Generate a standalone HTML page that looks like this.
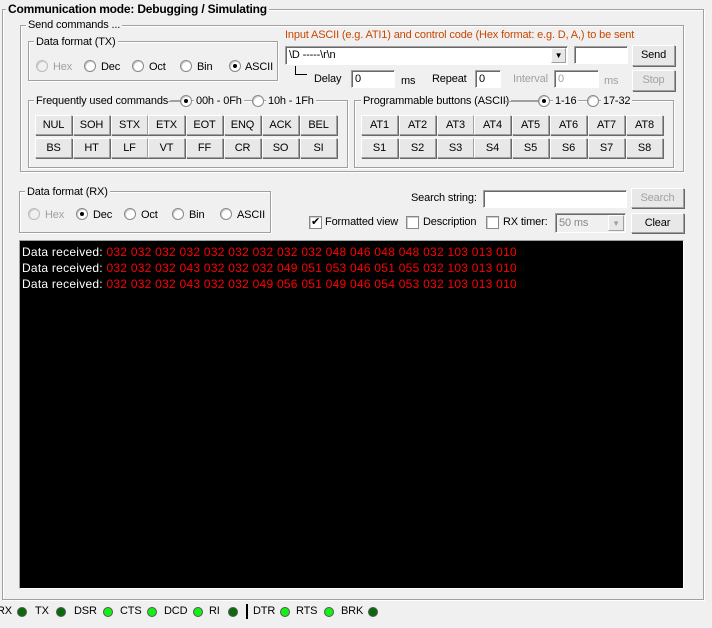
<!DOCTYPE html>
<html><head><meta charset="utf-8"><style>
*{box-sizing:border-box;margin:0;padding:0}
body{width:712px;height:628px;background:#f0f0f0;font-family:"Liberation Sans",Arial,sans-serif;font-size:11px;letter-spacing:-0.15px;color:#000;position:relative;overflow:hidden}
.a{position:absolute;white-space:nowrap}
span.a{margin-top:2px}
.g{position:absolute;border:1px solid #a0a0a0;box-shadow:1px 1px 0 #fff, inset 1px 1px 0 #fff}
.gt{position:absolute;background:#f0f0f0;padding:0 2px;white-space:nowrap;line-height:14px}
.btn{position:absolute;background:#e8e8e8;border:1px solid;border-color:#fff #a0a0a0 #a0a0a0 #fff;box-shadow:1px 1px 0 #696969;text-align:center;line-height:18px}
.in{position:absolute;background:#fff;border:1px solid;border-color:#a0a0a0 #fff #fff #a0a0a0;box-shadow:inset 1px 1px 0 #696969;padding-left:3px;line-height:16px}
.r{position:absolute;width:12px;height:12px;border-radius:50%;background:#fff;border:1px solid #888;box-shadow:inset 1px 1px 0 #ccc}
.r.on::after{content:"";position:absolute;left:3px;top:3px;width:4px;height:4px;border-radius:50%;background:#000}
.r.dis{background:#f0f0f0;border-color:#bbb}
.cb{position:absolute;width:13px;height:13px;background:#fff;border:1px solid #888;box-shadow:inset 1px 1px 0 #ccc}
.grey{color:#a0a0a0}
.led{position:absolute;width:10px;height:10px;border-radius:50%;border:1px solid #555;top:607px}
.d{background:#0a6a0a}.l{background:#14f014}
</style></head><body>
<div class="g" style="left:2px;top:9px;width:702px;height:591px"></div>
<div class="gt" style="left:6px;top:2px;font-weight:bold;font-size:12px;letter-spacing:-0.2px">Communication mode: Debugging / Simulating</div>

<div class="g" style="left:20px;top:25px;width:664px;height:147px"></div>
<div class="gt" style="left:26px;top:18px">Send commands ...</div>

<div class="g" style="left:28px;top:41px;width:250px;height:40px"></div>
<div class="gt" style="left:34px;top:35px">Data format (TX)</div>
<div class="r dis" style="left:36px;top:60px"></div><span class="a grey" style="left:53px;top:59px">Hex</span>
<div class="r" style="left:84px;top:60px"></div><span class="a" style="left:101px;top:59px">Dec</span>
<div class="r" style="left:132px;top:60px"></div><span class="a" style="left:149px;top:59px">Oct</span>
<div class="r" style="left:180px;top:60px"></div><span class="a" style="left:197px;top:59px">Bin</span>
<div class="r on" style="left:229px;top:60px"></div><span class="a" style="left:245px;top:59px">ASCII</span>

<span class="a" style="left:285px;top:27px;color:#c84800">Input ASCII (e.g. ATI1) and control code (Hex format: e.g. D, A,) to be sent</span>
<div class="in" style="left:285px;top:46px;width:283px;height:19px">\D -----\r\n</div>
<div class="btn" style="left:551px;top:48px;width:15px;height:15px;box-shadow:none;font-size:8px;line-height:14px">▼</div>
<div class="in" style="left:574px;top:46px;width:54px;height:18px"></div>
<div class="btn" style="left:632px;top:45px;width:43px;height:21px;line-height:19px">Send</div>

<div class="a" style="left:295px;top:66px;width:12px;height:9px;border-left:1px solid #000;border-bottom:1px solid #000"></div>
<span class="a" style="left:314px;top:71px">Delay</span>
<div class="in" style="left:351px;top:70px;width:44px;height:18px">0</div>
<span class="a" style="left:401px;top:73px">ms</span>
<span class="a" style="left:432px;top:71px">Repeat</span>
<div class="in" style="left:475px;top:70px;width:26px;height:18px">0</div>
<span class="a grey" style="left:513px;top:71px">Interval</span>
<div class="in" style="left:554px;top:70px;width:45px;height:18px;color:#a0a0a0">0</div>
<span class="a grey" style="left:604px;top:73px">ms</span>
<div class="btn grey" style="left:632px;top:70px;width:43px;height:21px;line-height:19px">Stop</div>

<div class="g" style="left:28px;top:100px;width:320px;height:68px"></div>
<div class="gt" style="left:34px;top:94px">Frequently used commands</div>
<div class="a" style="left:168px;top:101px;width:12px;border-top:1px solid #a0a0a0"></div>
<div class="r on" style="left:180px;top:95px"></div><span class="gt" style="left:194px;top:94px">00h - 0Fh</span>
<div class="r" style="left:252px;top:95px"></div><span class="gt" style="left:266px;top:94px">10h - 1Fh</span>

<div class="g" style="left:354px;top:100px;width:320px;height:68px"></div>
<div class="gt" style="left:361px;top:94px">Programmable buttons (ASCII)</div>
<div class="a" style="left:505px;top:101px;width:33px;border-top:1px solid #a0a0a0"></div>
<div class="r on" style="left:538px;top:95px"></div><span class="gt" style="left:553px;top:94px">1-16</span>
<div class="r" style="left:587px;top:95px"></div><span class="gt" style="left:601px;top:94px">17-32</span>

<div id="btns"></div>

<div class="g" style="left:19px;top:191px;width:252px;height:42px"></div>
<div class="gt" style="left:25px;top:185px">Data format (RX)</div>
<div class="r dis" style="left:28px;top:208px"></div><span class="a grey" style="left:45px;top:207px">Hex</span>
<div class="r on" style="left:76px;top:208px"></div><span class="a" style="left:93px;top:207px">Dec</span>
<div class="r" style="left:124px;top:208px"></div><span class="a" style="left:141px;top:207px">Oct</span>
<div class="r" style="left:172px;top:208px"></div><span class="a" style="left:189px;top:207px">Bin</span>
<div class="r" style="left:220px;top:208px"></div><span class="a" style="left:237px;top:207px">ASCII</span>

<span class="a" style="left:411px;top:190px">Search string:</span>
<div class="in" style="left:483px;top:190px;width:144px;height:18px"></div>
<div class="btn grey" style="left:631px;top:188px;width:53px;height:20px">Search</div>
<div class="cb" style="left:309px;top:216px"><span class="a" style="left:1px;top:-4px;font-size:11px">✔</span></div>
<span class="a" style="left:325px;top:214px">Formatted view</span>
<div class="cb" style="left:406px;top:216px"></div>
<span class="a" style="left:423px;top:214px">Description</span>
<div class="cb" style="left:486px;top:216px"></div>
<span class="a" style="left:503px;top:214px">RX timer:</span>
<div class="in" style="left:555px;top:213px;width:71px;height:20px;background:#f0f0f0;color:#888;line-height:18px">50 ms</div>
<div class="btn grey" style="left:608px;top:215px;width:16px;height:16px;box-shadow:none;font-size:8px;line-height:15px">▼</div>
<div class="btn" style="left:631px;top:213px;width:53px;height:20px">Clear</div>

<div class="a" style="left:19px;top:240px;width:665px;height:349px;background:#000;border:1px solid;border-color:#a0a0a0 #fff #fff #a0a0a0;padding:3px 0 0 2px;line-height:16px;color:#fff;font-size:12px;letter-spacing:0.25px">
<div>Data received: <span style="color:#f00">032 032 032 032 032 032 032 032 032 048 046 048 048 032 103 013 010</span></div>
<div>Data received: <span style="color:#f00">032 032 032 043 032 032 032 049 051 053 046 051 055 032 103 013 010</span></div>
<div>Data received: <span style="color:#f00">032 032 032 043 032 032 049 056 051 049 046 054 053 032 103 013 010</span></div>
</div>

<span class="a" style="left:-3px;top:603px">RX</span><div class="led d" style="left:17px"></div>
<span class="a" style="left:35px;top:603px">TX</span><div class="led d" style="left:56px"></div>
<span class="a" style="left:74px;top:603px">DSR</span><div class="led l" style="left:103px"></div>
<span class="a" style="left:120px;top:603px">CTS</span><div class="led l" style="left:147px"></div>
<span class="a" style="left:164px;top:603px">DCD</span><div class="led l" style="left:193px"></div>
<span class="a" style="left:209px;top:603px">RI</span><div class="led d" style="left:228px"></div>
<div class="a" style="left:246px;top:604px;width:2px;height:15px;background:#000"></div>
<span class="a" style="left:253px;top:603px">DTR</span><div class="led l" style="left:280px"></div>
<span class="a" style="left:296px;top:603px">RTS</span><div class="led l" style="left:324px"></div>
<span class="a" style="left:341px;top:603px">BRK</span><div class="led d" style="left:368px"></div>

<script>
var h='';
var r1=['NUL','SOH','STX','ETX','EOT','ENQ','ACK','BEL'],r2=['BS','HT','LF','VT','FF','CR','SO','SI'];
var p1=['AT1','AT2','AT3','AT4','AT5','AT6','AT7','AT8'],p2=['S1','S2','S3','S4','S5','S6','S7','S8'];
function row(a,x0,y){for(var i=0;i<8;i++){h+='<div class="btn" style="left:'+Math.round(x0+i*37.8)+'px;top:'+y+'px;width:37px;height:20px">'+a[i]+'</div>';}}
row(r1,35,115);row(r2,35,138);row(p1,361,115);row(p2,361,138);
document.getElementById('btns').innerHTML=h;
</script>
</body></html>
